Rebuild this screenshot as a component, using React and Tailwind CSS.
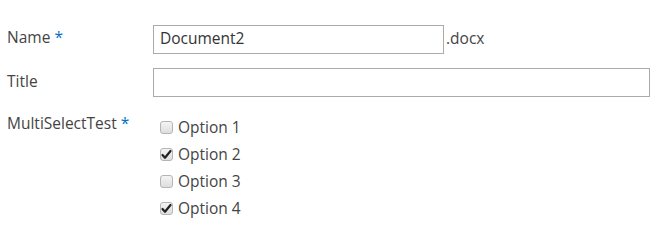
import React from "react";

const font = { fontFamily: '"Segoe UI", "Open Sans", "Noto Sans", sans-serif' };

function Box({ checked }) {
  return (
    <span className="inline-flex h-[13px] w-[13px] items-center justify-center rounded-[3px] border border-[#b5b5b5] bg-gradient-to-b from-[#f4f4f4] to-[#dedede]">
      {checked && (
        <svg width="11" height="11" viewBox="0 0 11 11">
          <path d="M1.5 6 L4 8.8 L9.5 2" fill="none" stroke="#222" strokeWidth="2.2" strokeLinecap="round" strokeLinejoin="round" />
        </svg>
      )}
    </span>
  );
}

export default function App() {
  const opts = [
    ["Option 1", false],
    ["Option 2", true],
    ["Option 3", false],
    ["Option 4", true],
  ];
  return (
    <div className="w-[665px] h-[235px] bg-white text-[15.5px] text-[#444]" style={font}>
      <div className="pt-[25px] pl-[7px] flex flex-col">
        <div className="flex items-start h-[43px]">
          <div className="w-[146px] pt-[1px]">
            Name <span className="text-[#0072c6]">*</span>
          </div>
          <div className="h-[29px] w-[291px] border border-[#ababab] px-[6px] flex items-center text-[#333] pb-[1px]">
            Document2
          </div>
          <div className="pl-[2px] pt-[2px]">.docx</div>
        </div>
        <div className="flex items-start h-[44px]">
          <div className="w-[146px] pt-[2px]">Title</div>
          <div className="h-[29px] w-[497px] border border-[#ababab]" />
        </div>
        <div className="flex items-start">
          <div className="w-[146px]">
            MultiSelectTest <span className="text-[#0072c6]">*</span>
          </div>
          <div className="flex flex-col pl-[7px] pt-[2px]">
            {opts.map(([l, c]) => (
              <div key={l} className="flex items-center h-[27px] gap-[5px]">
                <Box checked={c} />
                <span className="text-[#444]">{l}</span>
              </div>
            ))}
          </div>
        </div>
      </div>
    </div>
  );
}
